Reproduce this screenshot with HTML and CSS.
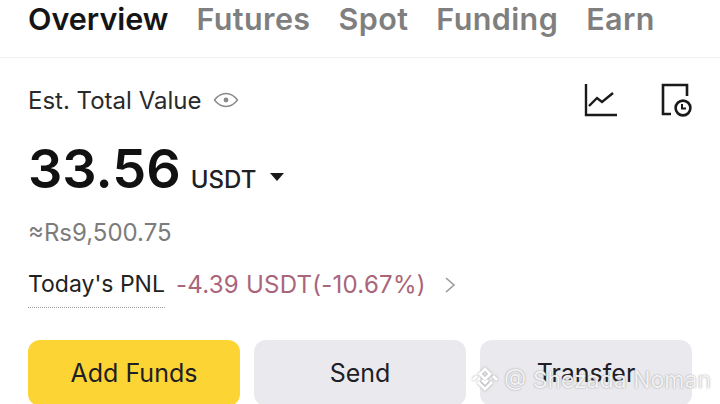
FILE: index.html
```html
<!DOCTYPE html>
<html lang="en">
<head>
    <meta charset="UTF-8">
    <title>Wallet Overview</title>
    <link rel="stylesheet" href="styles.css">
</head>
<body>
    <nav class="tabs">
        <span class="tab active">Overview</span>
        <span class="tab">Futures</span>
        <span class="tab">Spot</span>
        <span class="tab">Funding</span>
        <span class="tab">Earn</span>
    </nav>

    <main class="content">
        <div class="value-row">
            <div class="value-label">
                <span>Est. Total Value</span>
                <svg class="eye" width="26" height="16" viewBox="0 0 26 16" fill="none" stroke="#8a8a8a" stroke-width="1.4">
                    <path d="M1.5 8C5 3.5 9 1.5 13 1.5S21 3.5 24.5 8C21 12.5 17 14.5 13 14.5S5 12.5 1.5 8Z"/>
                    <circle cx="13" cy="8" r="2.4" fill="#8a8a8a" stroke="none"/>
                </svg>
            </div>
            <div class="value-icons">
                <svg width="34" height="34" viewBox="0 0 34 34" fill="none" stroke="#1a1a1a" stroke-width="2.4">
                    <path d="M2 1V32H33"/>
                    <path d="M5 23L13 15L18 19L29 10"/>
                </svg>
                <svg width="32" height="34" viewBox="0 0 32 34" fill="none" stroke="#1a1a1a" stroke-width="2.6">
                    <path d="M10 31H2V2H26V13"/>
                    <circle cx="22" cy="25" r="7.4"/>
                    <path d="M21 21V25.5H25" stroke-width="2"/>
                </svg>
            </div>
        </div>

        <div class="balance">
            <span class="amount">33.56</span>
            <span class="unit">USDT</span>
            <span class="caret"></span>
        </div>

        <div class="fiat">≈Rs9,500.75</div>

        <div class="pnl">
            <span class="pnl-label">Today's PNL</span>
            <span class="pnl-value">-4.39 USDT(-10.67%)</span>
            <svg width="12" height="18" viewBox="0 0 12 18" fill="none" stroke="#999" stroke-width="1.6">
                <path d="M2 2L10 9L2 16"/>
            </svg>
        </div>

        <div class="actions">
            <button class="btn primary">Add Funds</button>
            <button class="btn">Send</button>
            <button class="btn">Transfer</button>
        </div>
    </main>

    <div class="watermark">
        <svg width="28" height="28" viewBox="0 0 28 28" fill="none" stroke="#fff" stroke-width="2.8">
            <path d="M14 3L19 8L14 13L9 8Z"/>
            <path d="M2 14L6 10"/>
            <path d="M22 10L26 14"/>
            <path d="M7 16L14 23L21 16"/>
            <path d="M11 14L14 17L17 14"/>
        </svg>
        <span>@ Shezada Noman</span>
    </div>
</body>
</html>
```

FILE: styles.css
```css
* {
    box-sizing: border-box;
}
html, body {
    height: 404px;
    overflow: hidden;
}
body {
    margin: 0;
    background: #fff;
    font-family: Inter, "Liberation Sans", sans-serif;
    color: #1e2026;
}
.tabs {
    display: flex;
    gap: 28px;
    height: 58px;
    padding: 0 28px;
    border-bottom: 1px solid #f3f3f3;
    font-size: 30.5px;
    font-weight: 600;
    line-height: 38px;
    letter-spacing: 0.4px;
    color: #7f7f7f;
}
.tab.active {
    letter-spacing: 0;
    color: #151515;
}
.content {
    padding: 0 28px;
}
.value-row {
    display: flex;
    justify-content: space-between;
    align-items: center;
    height: 84px;
}
.value-label {
    display: flex;
    align-items: center;
    gap: 12px;
    font-size: 24px;
    color: #2a2a2a;
}
.value-icons {
    display: flex;
    gap: 43px;
    margin-right: -1px;
}
.balance {
    display: flex;
    align-items: baseline;
    height: 58px;
    margin-top: -2px;
}
.amount {
    font-size: 54px;
    font-weight: 600;
    line-height: 58px;
    color: #111;
}
.unit {
    margin-left: 10px;
    font-size: 24px;
    font-weight: 500;
}
.caret {
    margin-left: 14px;
    margin-top: 15px;
    border-top: 8px solid #1a1a1a;
    border-left: 7px solid transparent;
    border-right: 7px solid transparent;
    align-self: center;
}
.fiat {
    margin-top: 21px;
    font-size: 24px;
    line-height: 28px;
    color: #7c7c7c;
}
.pnl {
    display: flex;
    align-items: center;
    margin-top: 22px;
    font-size: 23px;
    line-height: 30px;
}
.pnl-label {
    padding-bottom: 8px;
    margin-bottom: -8px;
    border-bottom: 1px dotted #999;
    color: #222;
}
.pnl-value {
    margin-left: 11px;
    margin-right: 18px;
    font-size: 24px;
    letter-spacing: 0.25px;
    color: #a9657a;
}
.actions {
    display: flex;
    gap: 14px;
    margin-top: 40px;
}
.btn {
    flex: 1;
    height: 66px;
    border: none;
    border-radius: 12px;
    background: #eaeaee;
    font-family: inherit;
    font-size: 25px;
    color: #1e2026;
    padding: 0;
}
.btn.primary {
    background: #fcd535;
}
.watermark {
    position: absolute;
    left: 471px;
    top: 366px;
    display: flex;
    align-items: center;
    gap: 5px;
    font-size: 23px;
    color: rgba(255, 255, 255, 0.9);
    text-shadow: 0 0 1.5px rgba(90, 90, 90, 0.7);
}
.watermark svg {
    filter: drop-shadow(0 0 1px rgba(120, 120, 120, 0.7));
}
```
